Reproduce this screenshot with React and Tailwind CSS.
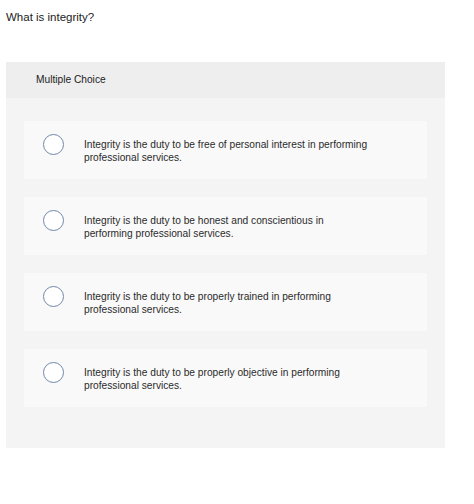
import React from "react";

const options = [
  "Integrity is the duty to be free of personal interest in performing professional services.",
  "Integrity is the duty to be honest and conscientious in performing professional services.",
  "Integrity is the duty to be properly trained in performing professional services.",
  "Integrity is the duty to be properly objective in performing professional services.",
];

export default function App() {
  return (
    <div className="w-[474px] h-[504px] bg-white text-[#333] font-['Liberation_Sans',Arial,sans-serif]">
      <div className="px-[6px] pt-[9px] text-[11.5px] leading-[16px] text-[#222]">What is integrity?</div>

      <div className="mx-[6px] mt-[37px] w-[439px] bg-[#f4f4f4]">
        <div className="h-[36px] bg-[#eeeeee] pl-[30px] flex items-center text-[10.2px] text-[#222]">
          Multiple Choice
        </div>
        <div className="px-[18px] pt-[23px] pb-[41px] flex flex-col gap-[18px]">
          {options.map((text) => (
            <div key={text} className="h-[58px] bg-[#f9f9f9] flex items-start pt-[13px]">
              <div className="ml-[19px] w-[21px] h-[21px] rounded-full border-[1.5px] border-[#6f88a8] bg-white shrink-0" />
              <p className="ml-[20px] w-[288px] text-[10.2px] leading-[13px] mt-[4px] text-[#2b2b2b]">{text}</p>
            </div>
          ))}
        </div>
      </div>
    </div>
  );
}
